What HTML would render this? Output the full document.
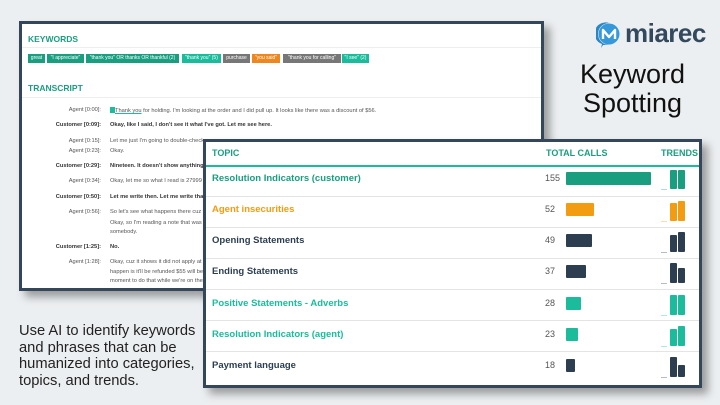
<!DOCTYPE html>
<html><head><meta charset="utf-8"><style>
*{margin:0;padding:0;box-sizing:border-box}
body{width:720px;height:405px;background:#eceff1;position:relative;overflow:hidden;font-family:"Liberation Sans",sans-serif}
.a{position:absolute;white-space:nowrap}
.p1{position:absolute;left:19px;top:21px;width:525px;height:270px;background:#fff;border:3px solid #34465a;box-shadow:6px 6px 8px rgba(0,0,0,.35)}
.p2{position:absolute;left:203px;top:139px;width:499px;height:249px;background:#fff;border:3px solid #34465a;box-shadow:6px 6px 8px rgba(0,0,0,.35)}
.h{color:#1a9e80;font-weight:bold;font-size:8px}
.tag{position:absolute;top:54px;height:9px;font-size:5px;color:#fff;line-height:9px;text-align:center}
.lbl{position:absolute;width:80px;left:21px;text-align:right;font-size:5.7px;color:#555}
.txt{position:absolute;left:110px;font-size:5.7px;color:#555;white-space:nowrap}
.b{font-weight:bold;color:#333}
.row{position:absolute;left:206px;width:493px;border-top:1px solid #e4e4e4;height:31px}
.tp{position:absolute;left:212px;font-size:9.5px;font-weight:bold}
.n{position:absolute;left:545px;font-size:9px;color:#555}
.bar{position:absolute;left:566px;height:13px;border-radius:1px}
.tb{position:absolute;width:7px;border-radius:1px}
.base{position:absolute;left:661px;width:6px;height:1px;opacity:.35}
</style></head><body>
<div class="p1"></div>
<div class="a h" style="left:28px;top:34px;font-size:8.5px">KEYWORDS</div>
<div class="a" style="left:22px;top:47px;width:519px;height:1px;background:#eee"></div>
<div class="tag" style="left:28px;width:17px;background:#1a9e80">great</div>
<div class="tag" style="left:47px;width:37px;background:#1a9e80">"I appreciate"</div>
<div class="tag" style="left:86px;width:93px;background:#1a9e80">"thank you" OR thanks OR thankful (2)</div>
<div class="tag" style="left:182px;width:39px;background:#1abc9c">"thank you" (5)</div>
<div class="tag" style="left:223px;width:27px;background:#777">purchase</div>
<div class="tag" style="left:252px;width:28px;background:#f0861e">"you said"</div>
<div class="tag" style="left:283px;width:58px;background:#777">"thank you for calling"</div>
<div class="tag" style="left:342px;width:27px;background:#1abc9c">"I see" (2)</div>
<div class="a h" style="left:28px;top:83px;font-size:8.5px">TRANSCRIPT</div>
<div class="a" style="left:22px;top:97px;width:519px;height:1px;background:#eee"></div>
<div class="lbl" style="top:107px">Agent [0:00]:</div><div class="txt" style="top:107px"><span style="display:inline-block;width:5px;height:6px;background:#1abc9c;vertical-align:-1px"></span><u style="text-decoration-color:#1abc9c">Thank you</u> for holding. I'm looking at the order and I did pull up. It looks like there was a discount of $56.</div>
<div class="lbl b" style="top:122px">Customer [0:09]:</div><div class="txt b" style="top:122px">Okay, like I said, I don't see it what I've got. Let me see here.</div>
<div class="lbl" style="top:138px">Agent [0:15]:</div><div class="txt" style="top:138px">Let me just I'm going to double-check</div>
<div class="lbl" style="top:148px">Agent [0:23]:</div><div class="txt" style="top:148px">Okay.</div>
<div class="lbl b" style="top:163px">Customer [0:29]:</div><div class="txt b" style="top:163px">Nineteen. It doesn't show anything</div>
<div class="lbl" style="top:178px">Agent [0:34]:</div><div class="txt" style="top:178px">Okay, let me so what I read is 27999 a</div>
<div class="lbl b" style="top:194px">Customer [0:50]:</div><div class="txt b" style="top:194px">Let me write then. Let me write tha</div>
<div class="lbl" style="top:209px">Agent [0:56]:</div><div class="txt" style="top:209px">So let's see what happens there cuz th</div>
<div class="txt" style="top:220px">Okay, so I'm reading a note that was p</div>
<div class="txt" style="top:229px">somebody.</div>
<div class="lbl b" style="top:244px">Customer [1:25]:</div><div class="txt b" style="top:244px">No.</div>
<div class="lbl" style="top:259px">Agent [1:28]:</div><div class="txt" style="top:259px">Okay, cuz it shows it did not apply at t</div>
<div class="txt" style="top:269px">happen is it'll be refunded $55 will be</div>
<div class="txt" style="top:278px">moment to do that while we're on the</div>

<div class="p2"></div>
<div class="a h" style="left:212px;top:148px;font-size:9px">TOPIC</div>
<div class="a h" style="left:546px;top:148px;font-size:9px">TOTAL CALLS</div>
<div class="a h" style="left:661px;top:148px;font-size:9px">TRENDS</div>
<div class="a" style="left:206px;top:165px;width:493px;height:2px;background:#1abc9c"></div>

<div class="row" style="top:227px"></div><div class="row" style="top:196px"></div><div class="row" style="top:258px"></div><div class="row" style="top:289px"></div><div class="row" style="top:320px"></div><div class="row" style="top:351px"></div>

<div class="tp" style="top:173px;color:#1a9e80">Resolution Indicators (customer)</div>
<div class="tp" style="top:204px;color:#f39c12">Agent insecurities</div>
<div class="tp" style="top:235px;color:#2c3e50">Opening Statements</div>
<div class="tp" style="top:266px;color:#2c3e50">Ending Statements</div>
<div class="tp" style="top:298px;color:#1abc9c">Positive Statements - Adverbs</div>
<div class="tp" style="top:329px;color:#1abc9c">Resolution Indicators (agent)</div>
<div class="tp" style="top:360px;color:#2c3e50">Payment language</div>

<div class="n" style="top:173px">155</div><div class="bar" style="top:172px;width:85px;background:#1a9e80"></div>
<div class="n" style="top:204px">52</div><div class="bar" style="top:203px;width:28px;background:#f39c12"></div>
<div class="n" style="top:235px">49</div><div class="bar" style="top:234px;width:26px;background:#2c3e50"></div>
<div class="n" style="top:266px">37</div><div class="bar" style="top:265px;width:20px;background:#2c3e50"></div>
<div class="n" style="top:298px">28</div><div class="bar" style="top:297px;width:15px;background:#1abc9c"></div>
<div class="n" style="top:329px">23</div><div class="bar" style="top:328px;width:12px;background:#1abc9c"></div>
<div class="n" style="top:360px">18</div><div class="bar" style="top:359px;width:9px;background:#2c3e50"></div>

<div class="base" style="top:189px;background:#1a9e80"></div><div class="tb" style="left:670px;top:170px;height:19px;background:#1a9e80"></div><div class="tb" style="left:678px;top:170px;height:19px;background:#1a9e80"></div>
<div class="base" style="top:221px;background:#f39c12"></div><div class="tb" style="left:670px;top:203px;height:18px;background:#f39c12"></div><div class="tb" style="left:678px;top:201px;height:20px;background:#f39c12"></div>
<div class="base" style="top:252px;background:#2c3e50"></div><div class="tb" style="left:670px;top:235px;height:17px;background:#2c3e50"></div><div class="tb" style="left:678px;top:232px;height:20px;background:#2c3e50"></div>
<div class="base" style="top:283px;background:#2c3e50"></div><div class="tb" style="left:670px;top:263px;height:20px;background:#2c3e50"></div><div class="tb" style="left:678px;top:268px;height:15px;background:#2c3e50"></div>
<div class="base" style="top:315px;background:#1abc9c"></div><div class="tb" style="left:670px;top:295px;height:20px;background:#1abc9c"></div><div class="tb" style="left:678px;top:295px;height:20px;background:#1abc9c"></div>
<div class="base" style="top:346px;background:#1abc9c"></div><div class="tb" style="left:670px;top:329px;height:17px;background:#1abc9c"></div><div class="tb" style="left:678px;top:326px;height:20px;background:#1abc9c"></div>
<div class="base" style="top:377px;background:#2c3e50"></div><div class="tb" style="left:670px;top:357px;height:20px;background:#2c3e50"></div><div class="tb" style="left:678px;top:365px;height:12px;background:#2c3e50"></div>

<svg class="a" style="left:596px;top:22px" width="26" height="26" viewBox="0 0 26 26"><path d="M13 1a11 11 0 1 0 0 22h-6l-2 3 1-4A11 11 0 0 1 13 1z" fill="#2e86c1"/><circle cx="13" cy="12" r="10.5" fill="#3498db"/><path d="M7 17V8l6 7 6-7v9" fill="none" stroke="#fff" stroke-width="2.4" stroke-linejoin="round"/></svg>
<div class="a" style="left:625px;top:18px;font-size:26px;font-weight:bold;color:#34495e;letter-spacing:-0.5px">miarec</div>
<div class="a" style="left:560px;top:60px;width:145px;text-align:center;font-size:27px;line-height:29px;color:#111;white-space:normal">Keyword Spotting</div>
<div class="a" style="left:19px;top:323px;font-size:14.7px;line-height:16.5px;color:#222;white-space:normal;width:192px">Use AI to identify keywords and phrases that can be humanized into categories, topics, and trends.</div>
</body></html>
